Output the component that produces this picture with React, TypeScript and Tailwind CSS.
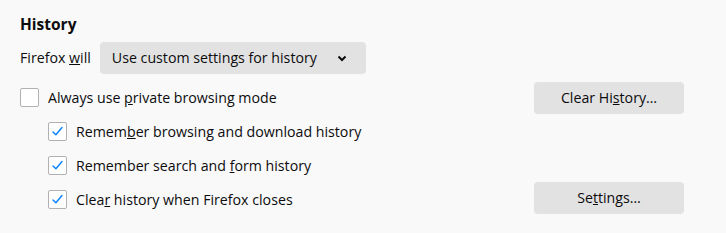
import { ReactNode } from 'react'

function Checkbox({ checked }: { checked?: boolean }) {
  return (
    <span className="flex h-[19px] w-[19px] shrink-0 items-center justify-center rounded-[2px] border border-[#b1b1b3] bg-white">
      {checked && (
        <svg className="h-[13px] w-[13px]" viewBox="0 0 16 16" fill="none">
          <path d="M2.5 8.5 6 12 13.5 3" stroke="#0a84ff" strokeWidth={1.8} strokeLinecap="round" strokeLinejoin="round" />
        </svg>
      )}
    </span>
  )
}

function Check({ checked, indent, children }: { checked?: boolean; indent?: boolean; children: ReactNode }) {
  return (
    <label className={`flex items-center gap-[9px] ${indent ? 'pl-7' : ''}`}>
      <Checkbox checked={checked} />
      <span>{children}</span>
    </label>
  )
}

function Button({ className = '', children }: { className?: string; children: ReactNode }) {
  return (
    <button className={`h-8 w-[150px] rounded-[4px] bg-[#e2e2e3] text-[14.2px] text-[#0c0c0d] ${className}`}>
      {children}
    </button>
  )
}

export default function App() {
  return (
    <div className="h-[233px] w-[726px] bg-[#f9f9fa] pl-5 pr-[42px] pt-[13px] font-['Open_Sans',sans-serif] text-[14.2px] text-[#0c0c0d]">
      <h1 className="text-[15.5px] font-bold leading-[22px]">History</h1>

      <div className="mt-[7px] flex items-center gap-[9px]">
        <span>
          Firefox <u>w</u>ill
        </span>
        <div className="flex h-8 w-[266px] items-center justify-between rounded-[4px] bg-[#e2e2e3] pl-3 pr-[19px]">
          <span>Use custom settings for history</span>
          <svg className="h-[10px] w-[10px]" viewBox="0 0 10 10">
            <path d="M1.5 3.5 5 7l3.5-3.5" stroke="#0c0c0d" strokeWidth={2} fill="none" />
          </svg>
        </div>
      </div>

      <div className="mt-[7px] flex h-[34px] items-center justify-between">
        <Check>
          Always use <u>p</u>rivate browsing mode
        </Check>
        <Button>
          Clear Hi<u>s</u>tory…
        </Button>
      </div>

      <div className="flex h-[34px] items-center">
        <Check checked indent>
          Remem<u>b</u>er browsing and download history
        </Check>
      </div>

      <div className="flex h-[34px] items-center">
        <Check checked indent>
          Remember search and <u>f</u>orm history
        </Check>
      </div>

      <div className="flex h-[34px] items-center justify-between">
        <Check checked indent>
          Clea<u>r</u> history when Firefox closes
        </Check>
        <Button className="mb-[5px]">
          Se<u>t</u>tings…
        </Button>
      </div>
    </div>
  )
}
